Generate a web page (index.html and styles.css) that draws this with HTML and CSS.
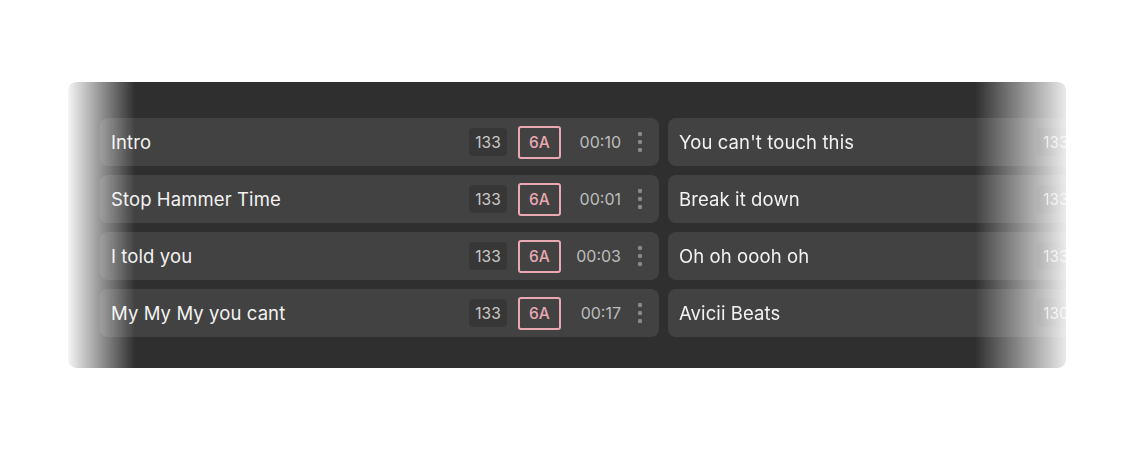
FILE: index.html
```html
<!DOCTYPE html>
<html>
<head>
<meta charset="utf-8">
<link rel="stylesheet" href="styles.css">
</head>
<body>
<div class="stage">
  <div class="panel">
    <div class="columns">
      <div class="col">
        <div class="card"><span class="title">Intro</span><span class="bpm">133</span><span class="key">6A</span><span class="time">00:10</span><span class="more"><svg width="6" height="22" viewBox="0 0 6 22"><circle cx="3" cy="3" r="2.2"/><circle cx="3" cy="11" r="2.2"/><circle cx="3" cy="19" r="2.2"/></svg></span></div>
        <div class="card"><span class="title">Stop Hammer Time</span><span class="bpm">133</span><span class="key">6A</span><span class="time">00:01</span><span class="more"><svg width="6" height="22" viewBox="0 0 6 22"><circle cx="3" cy="3" r="2.2"/><circle cx="3" cy="11" r="2.2"/><circle cx="3" cy="19" r="2.2"/></svg></span></div>
        <div class="card"><span class="title">I told you</span><span class="bpm">133</span><span class="key">6A</span><span class="time">00:03</span><span class="more"><svg width="6" height="22" viewBox="0 0 6 22"><circle cx="3" cy="3" r="2.2"/><circle cx="3" cy="11" r="2.2"/><circle cx="3" cy="19" r="2.2"/></svg></span></div>
        <div class="card"><span class="title">My My My you cant</span><span class="bpm">133</span><span class="key">6A</span><span class="time">00:17</span><span class="more"><svg width="6" height="22" viewBox="0 0 6 22"><circle cx="3" cy="3" r="2.2"/><circle cx="3" cy="11" r="2.2"/><circle cx="3" cy="19" r="2.2"/></svg></span></div>
      </div>
      <div class="col">
        <div class="card"><span class="title">You can't touch this</span><span class="bpm">133</span><span class="key">6A</span><span class="time">00:05</span><span class="more"><svg width="6" height="22" viewBox="0 0 6 22"><circle cx="3" cy="3" r="2.2"/><circle cx="3" cy="11" r="2.2"/><circle cx="3" cy="19" r="2.2"/></svg></span></div>
        <div class="card"><span class="title">Break it down</span><span class="bpm">133</span><span class="key">6A</span><span class="time">00:04</span><span class="more"><svg width="6" height="22" viewBox="0 0 6 22"><circle cx="3" cy="3" r="2.2"/><circle cx="3" cy="11" r="2.2"/><circle cx="3" cy="19" r="2.2"/></svg></span></div>
        <div class="card"><span class="title">Oh oh oooh oh</span><span class="bpm">133</span><span class="key">6A</span><span class="time">00:02</span><span class="more"><svg width="6" height="22" viewBox="0 0 6 22"><circle cx="3" cy="3" r="2.2"/><circle cx="3" cy="11" r="2.2"/><circle cx="3" cy="19" r="2.2"/></svg></span></div>
        <div class="card"><span class="title">Avicii Beats</span><span class="bpm">130</span><span class="key">6A</span><span class="time">00:08</span><span class="more"><svg width="6" height="22" viewBox="0 0 6 22"><circle cx="3" cy="3" r="2.2"/><circle cx="3" cy="11" r="2.2"/><circle cx="3" cy="19" r="2.2"/></svg></span></div>
      </div>
    </div>
  </div>
</div>
</body>
</html>
```
FILE: styles.css
```css
html, body {
  margin: 0;
  padding: 0;
  background: #ffffff;
}
body {
  font-family: Inter, "Noto Sans", sans-serif;
}
.stage {
  padding: 82px 70px 0 68px;
}
.panel {
  width: 998px;
  height: 286px;
  box-sizing: border-box;
  background: #2f2f2f;
  border-radius: 8px;
  overflow: hidden;
  padding: 36px 0 0 32px;
  -webkit-mask-image: linear-gradient(to right, rgba(0,0,0,0.05) 0, #000 67px, #000 907px, rgba(0,0,0,0.1) 998px);
  mask-image: linear-gradient(to right, rgba(0,0,0,0.05) 0, #000 67px, #000 907px, rgba(0,0,0,0.1) 998px);
}
.columns {
  display: flex;
  gap: 9px;
}
.col {
  flex: 0 0 559px;
  display: flex;
  flex-direction: column;
  gap: 9px;
}
.card {
  height: 48px;
  background: #424242;
  border-radius: 8px;
  display: flex;
  align-items: center;
  padding-left: 11px;
}
.title {
  flex: 1;
  color: #f2f2f2;
  font-size: 18.5px;
  font-weight: 400;
  letter-spacing: 0.1px;
}
.bpm {
  width: 38px;
  height: 28px;
  background: #373737;
  border-radius: 4px;
  color: #c9c9c9;
  font-size: 15.5px;
  display: flex;
  align-items: center;
  justify-content: center;
  margin-right: 11px;
}
.key {
  width: 43px;
  height: 33px;
  box-sizing: border-box;
  border: 2px solid #e9a8b2;
  border-radius: 3px;
  color: #e9a8b2;
  font-size: 15.5px;
  font-weight: 500;
  display: flex;
  align-items: center;
  justify-content: center;
}
.time {
  width: 60px;
  text-align: right;
  color: #bdbdbd;
  font-size: 16px;
}
.more {
  width: 38px;
  display: flex;
  justify-content: center;
}
.more svg {
  fill: #8a8a8a;
  display: block;
}
```
